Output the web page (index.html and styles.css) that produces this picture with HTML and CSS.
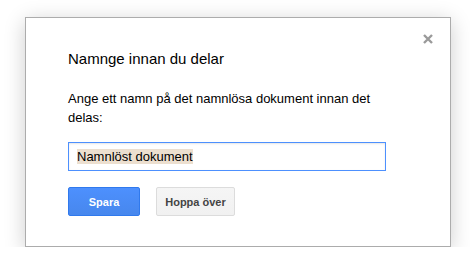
FILE: index.html
```html
<!DOCTYPE html>
<html lang="sv">
<head>
    <meta charset="UTF-8">
    <title>Namnge innan du delar</title>
    <link rel="stylesheet" href="styles.css">
</head>
<body>
    <div class="dialog">
        <svg class="dialog-close" width="10" height="10" viewBox="0 0 10 10">
            <path d="M1 1L9 9M9 1L1 9" stroke="#9a9a9a" stroke-width="2.4" fill="none"/>
        </svg>
        <h2 class="dialog-title">Namnge innan du delar</h2>
        <p class="dialog-text">Ange ett namn på det namnlösa dokument innan det delas:</p>
        <div class="name-input"><span class="name-selected">Namnlöst dokument</span></div>
        <div class="dialog-buttons">
            <button class="btn btn-primary">Spara</button>
            <button class="btn btn-plain">Hoppa över</button>
        </div>
    </div>
</body>
</html>
```

FILE: styles.css
```css
/* Basic reset */
* {
    margin: 0;
    padding: 0;
    box-sizing: border-box;
}

body {
    background-color: #fff;
    font-family: Arial, "Liberation Sans", sans-serif;
    color: #222;
}

/* Dialog box */
.dialog {
    position: relative;
    width: 426px;
    height: 230px;
    margin: 17px 0 0 25px;
    padding: 0 42px;
    border: 1px solid #acacac;
    background-color: #fff;
    box-shadow: 0 4px 20px rgba(0, 0, 0, 0.2);
}

.dialog-close {
    position: absolute;
    top: 16px;
    right: 17px;
}

.dialog-title {
    margin-top: 31px;
    font-size: 15px;
    font-weight: normal;
    line-height: 20px;
    color: #000;
}

.dialog-text {
    margin-top: 20px;
    font-size: 13px;
    line-height: 19px;
    color: #000;
}

/* Fake text input with selected text */
.name-input {
    width: 318px;
    height: 29px;
    margin-top: 15px;
    padding: 5px 8px;
    border: 1px solid #4d90fe;
    box-shadow: inset 0 1px 2px rgba(0, 0, 0, 0.1);
    font-size: 13px;
    line-height: 17px;
    color: #000;
}

.name-selected {
    background-color: #ecdfcf;
}

/* Buttons */
.dialog-buttons {
    display: flex;
    gap: 16px;
    margin-top: 16px;
}

.btn {
    height: 29px;
    padding: 0 8px;
    border-radius: 2px;
    font-family: Arial, "Liberation Sans", sans-serif;
    font-size: 11px;
    font-weight: bold;
}

.btn-primary {
    width: 72px;
    border: 1px solid #3079ed;
    background: linear-gradient(#4d90fe, #4787ed);
    color: #fff;
}

.btn-plain {
    width: 79px;
    border: 1px solid #dcdcdc;
    background: linear-gradient(#f5f5f5, #f1f1f1);
    color: #444;
}
```
